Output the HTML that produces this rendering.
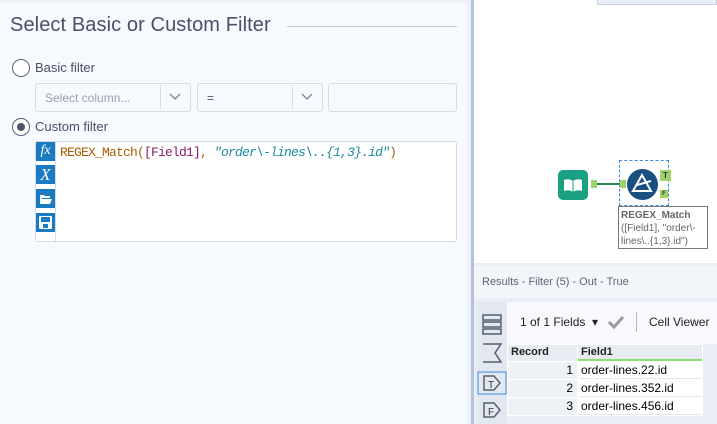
<!DOCTYPE html>
<html><head><style>
*{box-sizing:border-box;margin:0;padding:0}
body{width:717px;height:424px;overflow:hidden;background:#fff;font-family:"Liberation Sans",sans-serif;position:relative}
.a{position:absolute}
</style></head><body>
<div class="a" style="left:0;top:0;width:471px;height:424px;background:#eef1f8"></div>
<div class="a" style="left:0;top:3px;width:467px;height:421px;background:#f6f9fe"></div>
<div class="a" style="left:10px;top:14px;font-size:20px;color:#4a4f66;letter-spacing:0.1px">Select Basic or Custom Filter</div>
<div class="a" style="left:287px;top:26px;width:170px;height:1px;background:#c3c7cf"></div>
<div class="a" style="left:12px;top:59px;width:18px;height:18px;border:1.5px solid #5b607a;border-radius:50%;background:#fff"></div>
<div class="a" style="left:35px;top:60px;font-size:13px;color:#4a4f66">Basic filter</div>
<div class="a" style="left:35px;top:83px;width:156px;height:29px;border:1px solid #d6dbe6;border-radius:3px;background:#f6f9fe"></div>
<div class="a" style="left:45px;top:91px;font-size:12px;color:#9aa0b0">Select column...</div>
<div class="a" style="left:160px;top:85px;width:1px;height:24px;background:#d6dbe6"></div>
<svg class="a" style="left:168px;top:92px" width="14" height="10"><path d="M2 2l5 5 5-5" fill="none" stroke="#7c8294" stroke-width="1.3"/></svg>
<div class="a" style="left:197px;top:83px;width:126px;height:29px;border:1px solid #d6dbe6;border-radius:3px"></div>
<div class="a" style="left:207px;top:91px;font-size:12px;color:#4a4f66">=</div>
<div class="a" style="left:292px;top:85px;width:1px;height:24px;background:#d6dbe6"></div>
<svg class="a" style="left:300px;top:92px" width="14" height="10"><path d="M2 2l5 5 5-5" fill="none" stroke="#7c8294" stroke-width="1.3"/></svg>
<div class="a" style="left:328px;top:83px;width:129px;height:29px;border:1px solid #d6dbe6;border-radius:3px"></div>
<div class="a" style="left:12px;top:118px;width:18px;height:18px;border:1.5px solid #5b607a;border-radius:50%;background:#fff"></div>
<div class="a" style="left:17px;top:123px;width:8px;height:8px;border-radius:50%;background:#4d5470"></div>
<div class="a" style="left:35px;top:119px;font-size:13px;color:#4a4f66">Custom filter</div>
<div class="a" style="left:35px;top:141px;width:422px;height:101px;border:1px solid #d6dbe6;border-radius:3px;background:#fff"></div>
<div class="a" style="left:55px;top:142px;width:1px;height:99px;background:#d6dbe6"></div>
<div class="a" style="left:36px;top:142px;width:19px;height:19px;background:#1a7ac2;color:#fff;font:italic 14px 'Liberation Serif',serif;text-align:center;line-height:18px">fx</div>
<div class="a" style="left:36px;top:165px;width:19px;height:19px;background:#1a7ac2;color:#fff;font:italic 17px 'Liberation Serif',serif;text-align:center;line-height:19px">X</div>
<div class="a" style="left:36px;top:189px;width:19px;height:19px;background:#1a7ac2"><svg width="19" height="19"><path d="M4 6h4l1 1h5v2H6l-2 6z M6 10h10l-2 5H4z" fill="#fff"/></svg></div>
<div class="a" style="left:36px;top:213px;width:19px;height:19px;background:#1a7ac2"><svg width="19" height="19"><rect x="3" y="3" width="13" height="13" rx="1.5" fill="#fff"/><rect x="5" y="4" width="9" height="5" fill="#1a7ac2"/><rect x="7" y="11" width="5" height="4" fill="#1a7ac2"/></svg></div>
<div class="a" style="left:60px;top:145px;font:13px 'Liberation Mono',monospace;letter-spacing:-0.8px;white-space:pre"><span style="color:#a95e00">REGEX_Match(</span><span style="color:#8b1a6b">[Field1]</span><span style="color:#a95e00">, </span><span style="color:#1d8a9c;font-style:italic">"order\-lines\..{1,3}.id"</span><span style="color:#a95e00">)</span></div>
<div class="a" style="left:471px;top:0;width:3px;height:424px;background:#b3c1dc"></div>
<div class="a" style="left:597px;top:0;width:120px;height:5px;background:#e8eef8;border:1px solid #c5d0e3;border-top:0"></div>
<div class="a" style="left:558px;top:170px;width:30px;height:30px;border-radius:5px;background:#1aa083"></div>
<svg class="a" style="left:560px;top:172px" width="26" height="26"><path d="M4 8q5-2 9 1q4-3 9-1v11q-5-2-9 1q-4-3-9-1z" fill="#fff"/><path d="M13 9v11" stroke="#1aa083"/></svg>
<div class="a" style="left:591px;top:180px;width:6px;height:8px;background:#9ed36a"></div>
<div class="a" style="left:597px;top:183px;width:24px;height:2px;background:#2a8a4a"></div>
<div class="a" style="left:619px;top:160px;width:50px;height:46px;border:1px dashed #3b8de0"></div>
<div class="a" style="left:620px;top:180px;width:6px;height:8px;background:#9ed36a"></div>
<div class="a" style="left:627px;top:169px;width:31px;height:31px;border-radius:50%;background:#1a4f82"></div>
<svg class="a" style="left:627px;top:169px" width="31" height="31"><path d="M15 6L6 22h18z M10 16l14 -4" fill="none" stroke="#fff" stroke-width="2"/></svg>
<div class="a" style="left:660px;top:170px;width:11px;height:11px;background:#9ed36a;font:bold 8px sans-serif;text-align:center;line-height:11px;color:#333">T</div>
<div class="a" style="left:660px;top:190px;width:8px;height:8px;background:#9ed36a;font:bold 6px sans-serif;text-align:center;line-height:8px;color:#333">F</div>
<div class="a" style="left:618px;top:206px;width:90px;height:43px;border:1px solid #777;background:#fff;font-size:10px;color:#666;line-height:13px;padding:2px 2px;font-weight:bold">REGEX_Match<br><span style="font-weight:normal">([Field1], "order\-<br>lines\..{1,3}.id")</span></div>
<div class="a" style="left:474px;top:263px;width:243px;height:161px;background:#e9edf5"></div>
<div class="a" style="left:474px;top:266px;width:243px;height:32px;background:#f2f5fa"></div>
<div class="a" style="left:482px;top:276px;font-size:11px;color:#5e6474">Results - Filter (5) - Out - True</div>
<div class="a" style="left:477px;top:302px;width:30px;height:122px;background:#e2e7f0"></div>
<svg class="a" style="left:477px;top:302px" width="30" height="122"><path d="M6 13h18v5H6z M6 20h18v5H6z M6 27h18v5H6z" fill="none" stroke="#55606e" stroke-width="1.5"/><path d="M6 42h18l-6 9 6 9H6" fill="none" stroke="#55606e" stroke-width="1.5"/><rect x="1" y="70" width="28" height="22" fill="none" stroke="#3b8de0"/><path d="M7 74h10l6 7-6 7H7z M7 101h10l6 7-6 7H7z" fill="none" stroke="#55606e" stroke-width="1.5"/><text x="11" y="86" font-size="10" fill="#333" font-family="Liberation Sans">T</text><text x="11" y="113" font-size="10" fill="#333" font-family="Liberation Sans">F</text></svg>
<div class="a" style="left:507px;top:302px;width:210px;height:42px;background:#f8f9fc"></div>
<div class="a" style="left:520px;top:315px;font-size:12px;color:#222">1 of 1 Fields &nbsp;▾</div>
<svg class="a" style="left:607px;top:315px" width="18" height="14"><path d="M2 7l5 5 9-10" fill="none" stroke="#999" stroke-width="3"/></svg>
<div class="a" style="left:636px;top:312px;width:1px;height:20px;background:#bbb"></div>
<div class="a" style="left:649px;top:315px;font-size:12px;color:#222">Cell Viewer</div>
<div class="a" style="left:507px;top:344px;width:196px;height:80px;background:#fff"></div>
<div class="a" style="left:508px;top:345px;width:69px;height:16px;background:#e8ecf2;font-size:11px;font-weight:bold;padding:1px 3px;color:#222">Record</div>
<div class="a" style="left:578px;top:345px;width:124px;height:16px;background:#e8ecf2;font-size:11px;font-weight:bold;padding:1px 3px;color:#222;border-bottom:2px solid #88e070">Field1</div>
<div class="a" style="left:508px;top:362px;width:69px;height:17px;background:#eef1f6;font-size:12px;text-align:right;padding:1px 4px">1</div>
<div class="a" style="left:578px;top:362px;width:124px;height:17px;font-size:12px;padding:1px 3px;border-bottom:1px solid #e3e6ec">order-lines.22.id</div>
<div class="a" style="left:508px;top:380px;width:69px;height:17px;background:#eef1f6;font-size:12px;text-align:right;padding:1px 4px">2</div>
<div class="a" style="left:578px;top:380px;width:124px;height:17px;font-size:12px;padding:1px 3px;border-bottom:1px solid #e3e6ec">order-lines.352.id</div>
<div class="a" style="left:508px;top:398px;width:69px;height:17px;background:#eef1f6;font-size:12px;text-align:right;padding:1px 4px">3</div>
<div class="a" style="left:578px;top:398px;width:124px;height:17px;font-size:12px;padding:1px 3px;border-bottom:1px solid #e3e6ec">order-lines.456.id</div>
<div class="a" style="left:507px;top:416px;width:196px;height:8px;background:#e9edf5"></div>
</body></html>
